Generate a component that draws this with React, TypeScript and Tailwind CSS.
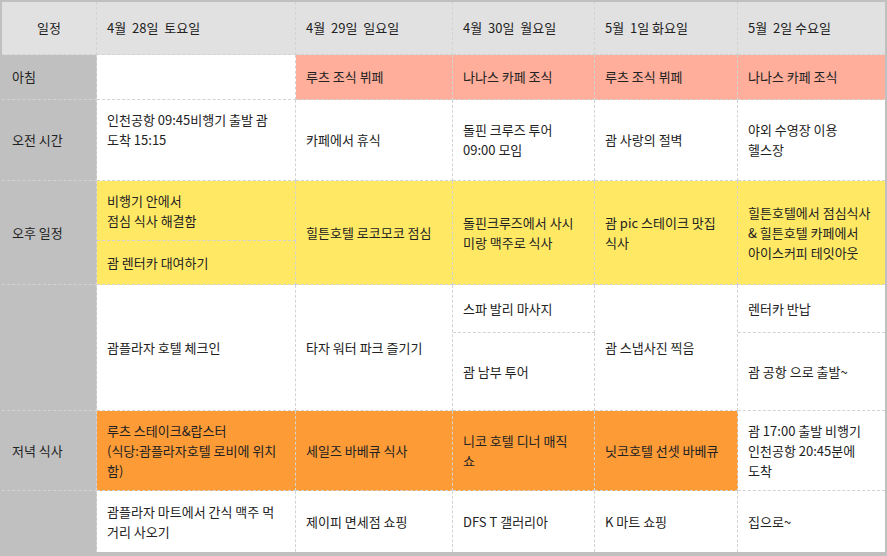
import React from "react";

type Cell = {
  text: string;
  bg?: string;
  span?: 2;
  col: number;
  lastRow?: boolean;
  center?: boolean;
};

const GRAY = "bg-[#c0c0c0]";
const HEAD = "bg-[#e1e1e1]";
const SALMON = "bg-[#ffae9b]";
const YELLOW = "bg-[#ffe964]";
const ORANGE = "bg-[#fd9b37]";
const WHITE = "bg-white";

const cells: Cell[] = [
  // header
  { text: "일정", bg: HEAD, col: 0, center: true },
  { text: "4월  28일  토요일", bg: HEAD, col: 1 },
  { text: "4월  29일  일요일", bg: HEAD, col: 2 },
  { text: "4월  30일  월요일", bg: HEAD, col: 3 },
  { text: "5월  1일 화요일", bg: HEAD, col: 4 },
  { text: "5월  2일 수요일", bg: HEAD, col: 5 },
  // 아침
  { text: "아침", bg: GRAY, col: 0 },
  { text: "", bg: WHITE, col: 1 },
  { text: "루츠 조식 뷔페", bg: SALMON, col: 2 },
  { text: "나나스 카페 조식", bg: SALMON, col: 3 },
  { text: "루츠 조식 뷔페", bg: SALMON, col: 4 },
  { text: "나나스 카페 조식", bg: SALMON, col: 5 },
  // 오전
  { text: "오전 시간", bg: GRAY, col: 0 },
  { text: "인천공항 09:45비행기 출발 괌\n도착 15:15\n ", col: 1 },
  { text: "카페에서 휴식", col: 2 },
  { text: "돌핀 크루즈 투어\n09:00 모임", col: 3 },
  { text: "괌 사랑의 절벽", col: 4 },
  { text: "야외 수영장 이용\n헬스장", col: 5 },
  // 오후
  { text: "오후 일정", bg: GRAY, col: 0, span: 2 },
  { text: "비행기 안에서\n점심 식사 해결함", bg: YELLOW, col: 1 },
  { text: "힐튼호텔 로코모코 점심", bg: YELLOW, col: 2, span: 2 },
  { text: "돌핀크루즈에서 사시\n미랑 맥주로 식사", bg: YELLOW, col: 3, span: 2 },
  { text: "괌 pic 스테이크 맛집\n식사", bg: YELLOW, col: 4, span: 2 },
  { text: "힐튼호텔에서 점심식사\n& 힐튼호텔 카페에서\n아이스커피 테잇아웃", bg: YELLOW, col: 5, span: 2 },
  { text: "괌 렌터카 대여하기", bg: YELLOW, col: 1 },
  // 오후 2
  { text: "", bg: GRAY, col: 0, span: 2 },
  { text: "괌플라자 호텔 체크인", col: 1, span: 2 },
  { text: "타자 워터 파크 즐기기", col: 2, span: 2 },
  { text: "스파 발리 마사지", col: 3 },
  { text: "괌 스냅사진 찍음", col: 4, span: 2 },
  { text: "렌터카 반납", col: 5 },
  { text: "괌 남부 투어", col: 3 },
  { text: "괌 공항 으로 출발~", col: 5 },
  // 저녁
  { text: "저녁 식사", bg: GRAY, col: 0 },
  { text: "루츠 스테이크&랍스터\n(식당:괌플라자호텔 로비에 위치\n함)", bg: ORANGE, col: 1 },
  { text: "세일즈 바베큐 식사", bg: ORANGE, col: 2 },
  { text: "니코 호텔 디너 매직\n쇼", bg: ORANGE, col: 3 },
  { text: "닛코호텔 선셋 바베큐", bg: ORANGE, col: 4 },
  { text: "괌 17:00 출발 비행기\n인천공항 20:45분에\n도착", col: 5 },
  // 마지막
  { text: "", bg: GRAY, col: 0, lastRow: true },
  { text: "괌플라자 마트에서 간식 맥주 먹\n거리 사오기", col: 1, lastRow: true },
  { text: "제이피 면세점 쇼핑", col: 2, lastRow: true },
  { text: "DFS T 갤러리아", col: 3, lastRow: true },
  { text: "K 마트 쇼핑", col: 4, lastRow: true },
  { text: "집으로~", col: 5, lastRow: true },
];

function TableCell({ cell }: { cell: Cell }) {
  return (
    <div
      className={[
        "flex items-center px-[10px] whitespace-pre border-dashed border-[#d3d3d3]",
        cell.bg ?? WHITE,
        cell.span === 2 ? "row-span-2" : "",
        cell.col < 5 ? "border-r" : "",
        cell.lastRow ? "" : "border-b",
        cell.center ? "justify-center" : "",
      ].join(" ")}
    >
      {cell.text}
    </div>
  );
}

export default function App() {
  return (
    <div className="w-[887px] h-[556px] bg-white font-['Noto_Sans_CJK_KR',sans-serif] text-[13px] leading-5 text-[#222]">
      <div className="border-2 border-b-4 border-[#c0c0c0] h-full">
        <div className="grid h-full grid-cols-[95px_199px_157px_142px_143px_147px] grid-rows-[53px_45px_81px_60px_44px_48px_78px_80px_61px]">
          {cells.map((c, i) => (
            <TableCell key={i} cell={c} />
          ))}
        </div>
      </div>
    </div>
  );
}
